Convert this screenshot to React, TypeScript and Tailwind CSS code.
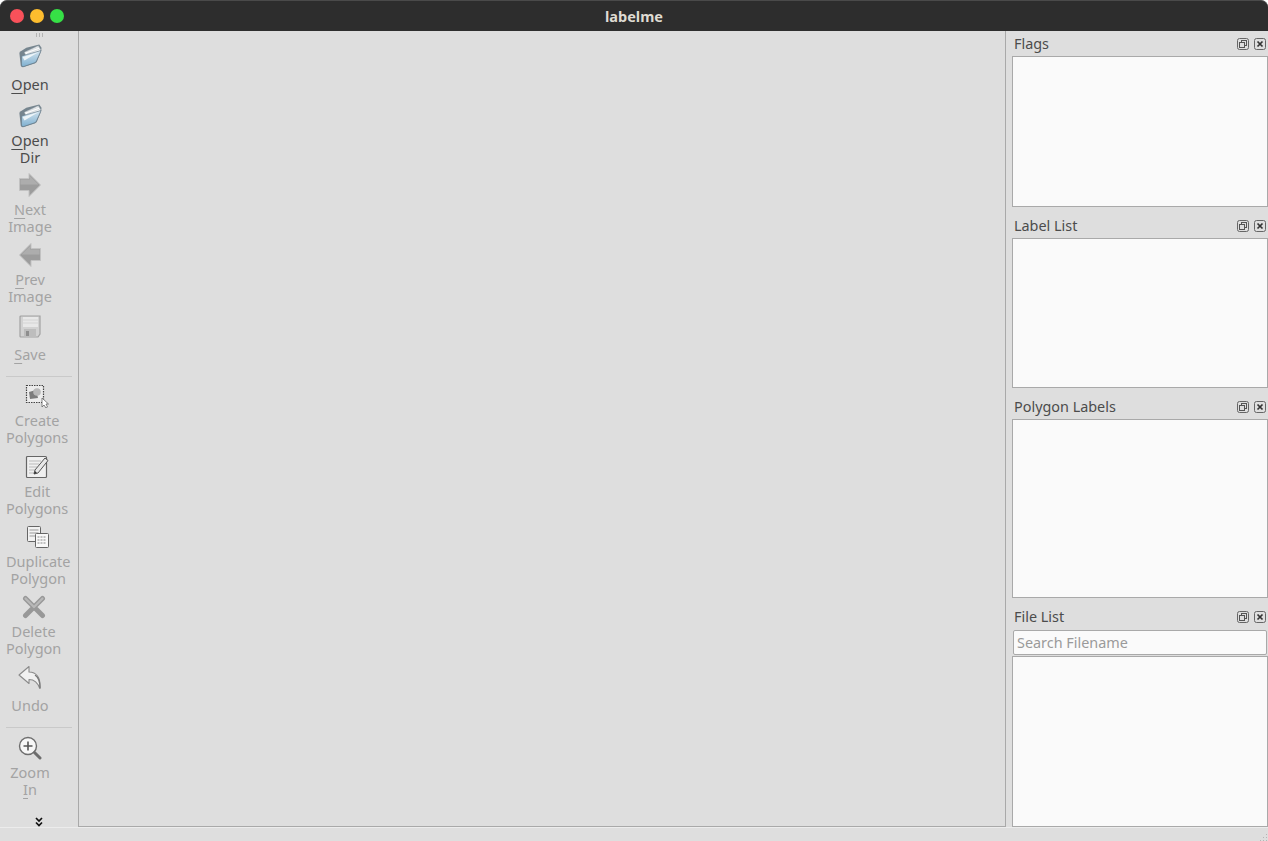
import { FunctionComponent, ReactNode } from 'react';

const FolderIcon = ({ id }: { id: string }) => (
  <svg width="26" height="26" viewBox="0 0 26 26">
    <defs>
      <linearGradient id={id} x1="0" y1="0" x2="0" y2="1">
        <stop offset="0" stopColor="#d4e4ef" />
        <stop offset="1" stopColor="#7fb0d0" />
      </linearGradient>
    </defs>
    <path d="M1.5 10 Q1.5 8 3.5 7.5 L9 4 L23 0.5 L25.5 4 L25 8 L20.5 19 Q20 20.5 18 21 L6 25 Q3.5 25.5 3 23.5Z" fill="#76858f" />
    <path d="M7 9 L22 2 L25 7 L9 14Z" fill="#fbfbfb" stroke="#a3adb4" strokeWidth="0.6" />
    <path d="M9 8.5 L22.5 3.5 M10 10.5 L23.5 5.5" stroke="#c6ced4" strokeWidth="0.7" />
    <path d="M4 13 L25 7 L20 18.5 Q19.5 20 17.5 20.5 L6 24.5 Q4 24.5 3.8 23Z" fill={`url(#${id})`} stroke="#647987" strokeWidth="0.7" />
    <path d="M5 14 L22 9 L7 18Z" fill="#f4f8fb" opacity="0.9" />
  </svg>
);

const ArrowIcon = ({ left }: { left?: boolean }) => (
  <svg width="24" height="24" viewBox="0 0 24 24" className={left ? '-scale-x-100' : ''}>
    <path d="M1.5 5.5 H11 V0.5 L22.5 12 L11 23.5 V17.5 H1.5Z" fill="#9c9c9c" stroke="#c2c2c2" strokeWidth="1" />
    <path d="M2.5 6.5 H12 V3 L20.5 11.5 H2.5Z" fill="#adadad" />
  </svg>
);

const SaveIcon = () => (
  <svg width="24" height="24" viewBox="0 0 24 24">
    <path d="M2 3 Q2 2 3 2 H22 V20 L20 23 H3 Q2 23 2 22Z" fill="#d2d2d2" stroke="#a2a2a2" strokeWidth="1.2" />
    <rect x="5" y="3" width="15" height="10" fill="#e8e8e8" />
    <path d="M5 6 H20 M5 9 H20" stroke="#d4d4d4" />
    <rect x="6" y="15" width="12" height="8" fill="#bdbdbd" />
    <rect x="8" y="17" width="3" height="5" fill="#8e8e8e" />
  </svg>
);

const CreateIcon = () => (
  <svg width="24" height="24" viewBox="0 0 24 24">
    <rect x="1.5" y="1.5" width="17" height="17" fill="#ececec" stroke="#444" strokeWidth="1.2" strokeDasharray="1.5 1" />
    <path d="M4 8 L11 6 L13 14 L5 15Z" fill="#7c7c7c" />
    <circle cx="12" cy="8" r="3.8" fill="#b8b8b8" />
    <path d="M17 14 V23 L19 21 L21 24 L22.5 23 L21 20 H23.5Z" fill="#fff" stroke="#666" strokeWidth="0.8" />
  </svg>
);

const EditIcon = () => (
  <svg width="24" height="24" viewBox="0 0 24 24">
    <rect x="1.5" y="1.5" width="20" height="21" rx="1" fill="#f0f0f0" stroke="#666" strokeWidth="1.2" />
    <path d="M4 6 H16 M4 9 H14 M4 12 H12 M4 15 H10 M4 18 H10" stroke="#bbb" />
    <path d="M9 19 L10 15 L20 3 L23 5.5 L13 18Z" fill="#e8e8e8" stroke="#555" />
    <path d="M9 19 L10 16 L12 18Z" fill="#333" />
  </svg>
);

const DuplicateIcon = () => (
  <svg width="24" height="24" viewBox="0 0 24 24">
    <rect x="1.5" y="1.5" width="13" height="15" rx="1" fill="#f2f2f2" stroke="#666" />
    <path d="M3.5 5 H12.5 M3.5 8 H12.5 M3.5 11 H12.5" stroke="#999" />
    <rect x="9.5" y="8.5" width="13" height="14" rx="1" fill="#f8f8f8" stroke="#666" />
    <path d="M11.5 12 H20.5 M11.5 15 H20.5 M11.5 18 H20.5" stroke="#888" strokeDasharray="2 1" />
  </svg>
);

const DeleteIcon = () => (
  <svg width="24" height="24" viewBox="0 0 24 24">
    <path d="M3.5 3.5 L20.5 20.5 M20.5 3.5 L3.5 20.5" stroke="#989898" strokeWidth="5" strokeLinecap="round" />
    <path d="M3.5 3.5 L12 12 M20.5 3.5 L12 12" stroke="#b8b8b8" strokeWidth="2.2" strokeLinecap="round" />
  </svg>
);

const UndoIcon = () => (
  <svg width="24" height="24" viewBox="0 0 24 24">
    <path d="M1 10 L11 1.5 V7 C18 7 23 12 22 24 C20 18 17 14.5 11 14.5 V18.5Z" fill="#f1f1f1" stroke="#8a8a8a" strokeWidth="1.1" strokeLinejoin="round" />
    <path d="M17 10 C20 12 22 17 22 23" stroke="#777" strokeWidth="1.2" fill="none" />
  </svg>
);

const ZoomIcon = () => (
  <svg width="24" height="24" viewBox="0 0 24 24">
    <circle cx="10" cy="10" r="8.5" fill="#f7f7f7" stroke="#6e6e6e" strokeWidth="1.4" />
    <path d="M10 5.5 V14.5 M5.5 10 H14.5" stroke="#555" strokeWidth="1.6" />
    <path d="M16.5 16.5 L22 22" stroke="#6e6e6e" strokeWidth="3" strokeLinecap="round" />
  </svg>
);

interface ToolItemProps {
  icon: ReactNode;
  label: ReactNode;
  className: string;
  labelClass: string;
  enabled?: boolean;
}

const ToolItem: FunctionComponent<ToolItemProps> = ({ icon, label, className, labelClass, enabled }) => (
  <div className={`ml-[6px] min-w-[48px] self-start flex flex-col items-center pt-[6px] ${className}`}>
    <div className="h-[24px] w-[24px] flex items-center justify-center">{icon}</div>
    <div className={`text-center text-[14.5px] leading-[17px] whitespace-nowrap ${labelClass} ${enabled ? 'text-[#4c4c4c]' : 'text-[#a3a3a3]'}`}>
      {label}
    </div>
  </div>
);

const Mn = ({ children, enabled }: { children: string; enabled?: boolean }) => (
  <span className={`underline underline-offset-[3px] decoration-1 ${enabled ? 'decoration-[#4c4c4c]' : 'decoration-[#a3a3a3]'}`}>{children}</span>
);

const Separator = ({ className }: { className: string }) => (
  <div className={`ml-[6px] w-[66px] h-px bg-[#c9c9c9] shrink-0 ${className}`} />
);

const Toolbar = () => (
  <div className="w-[78px] shrink-0 flex flex-col">
    <div className="h-[7px] flex justify-center gap-[2px] pt-[2px] pl-[1px]">
      <div className="w-px h-[4px] bg-[#b4b4b4]" />
      <div className="w-px h-[4px] bg-[#b4b4b4]" />
      <div className="w-px h-[4px] bg-[#b4b4b4]" />
    </div>
    <ToolItem className="h-[60px]" labelClass="mt-[8px]" enabled icon={<FolderIcon id="f1" />} label={<><Mn enabled>O</Mn>pen</>} />
    <ToolItem className="h-[69px]" labelClass="mt-[4px]" enabled icon={<FolderIcon id="f2" />} label={<><Mn enabled>O</Mn>pen<br />Dir</>} />
    <ToolItem className="h-[70px]" labelClass="mt-[4px]" icon={<ArrowIcon />} label={<><Mn>N</Mn>ext<br />Image</>} />
    <ToolItem className="h-[71px]" labelClass="mt-[4px]" icon={<ArrowIcon left />} label={<><Mn>P</Mn>rev<br />Image</>} />
    <ToolItem className="h-[60px]" labelClass="mt-[8px]" icon={<SaveIcon />} label={<><Mn>S</Mn>ave</>} />
    <Separator className="mt-[8px] mb-[1px]" />
    <ToolItem className="h-[71px]" labelClass="mt-[4px]" icon={<CreateIcon />} label={<>Create<br />Polygons</>} />
    <ToolItem className="h-[70px]" labelClass="mt-[4px]" icon={<EditIcon />} label={<>Edit<br />Polygons</>} />
    <ToolItem className="h-[70px]" labelClass="mt-[4px]" icon={<DuplicateIcon />} label={<>Duplicate<br />Polygon</>} />
    <ToolItem className="h-[70px]" labelClass="mt-[4px]" icon={<DeleteIcon />} label={<>Delete<br />Polygon</>} />
    <ToolItem className="h-[60px]" labelClass="mt-[8px]" icon={<UndoIcon />} label="Undo" />
    <Separator className="mt-[8px] mb-[2px]" />
    <ToolItem className="h-[70px]" labelClass="mt-[4px]" icon={<ZoomIcon />} label={<>Zoom<br /><Mn>I</Mn>n</>} />
    <div className="mt-auto ml-[35px]">
      <svg width="8" height="10" viewBox="0 0 8 10" className="block">
        <path d="M1 1 L4 4 L7 1 M1 5.5 L4 8.5 L7 5.5" stroke="#111" strokeWidth="1.7" fill="none" />
      </svg>
    </div>
  </div>
);

const DockTitle = ({ title }: { title: string }) => (
  <div className="h-[24px] shrink-0 flex items-center justify-between pl-[2px] pr-[2px] pb-[1px] text-[14.4px] text-[#4c4c4c]">
    <span>{title}</span>
    <div className="flex gap-[5px]">
      <svg width="12" height="12" viewBox="0 0 12 12">
        <rect x="0.5" y="0.5" width="11" height="11" rx="2" fill="none" stroke="#666" />
        <rect x="4.5" y="2.5" width="5" height="5" fill="none" stroke="#555" />
        <rect x="2.5" y="4.5" width="5" height="5" fill="#dedede" stroke="#555" />
      </svg>
      <svg width="12" height="12" viewBox="0 0 12 12">
        <rect x="0.5" y="0.5" width="11" height="11" rx="2" fill="none" stroke="#666" />
        <path d="M3.5 3.5 L8.5 8.5 M8.5 3.5 L3.5 8.5" stroke="#333" strokeWidth="1.7" />
      </svg>
    </div>
  </div>
);

const ListBox = ({ className }: { className: string }) => (
  <div className={`bg-[#fafafa] border border-[#a9a9a9] ${className}`} />
);

const Dock = () => (
  <div className="w-[262px] shrink-0 pt-px pl-[6px] flex flex-col">
    <DockTitle title="Flags" />
    <ListBox className="h-[151px]" />
    <div className="mt-[7px]"><DockTitle title="Label List" /></div>
    <ListBox className="h-[150px]" />
    <div className="mt-[7px]"><DockTitle title="Polygon Labels" /></div>
    <ListBox className="h-[179px]" />
    <div className="mt-[7px]"><DockTitle title="File List" /></div>
    <input
      readOnly
      placeholder="Search Filename"
      className="mt-[1px] h-[25px] w-[254px] ml-px shrink-0 rounded-[2px] bg-[#fafafa] border border-[#a9a9a9] px-[3px] text-[14.4px] outline-none placeholder:text-[#9a9a9a]"
    />
    <ListBox className="mt-px flex-1" />
  </div>
);

export default function App() {
  return (
    <div className="w-[1268px] h-[841px] flex flex-col overflow-hidden bg-white font-['Noto_Sans','Open_Sans',sans-serif]">
      <div className="h-[31px] shrink-0 relative flex items-center rounded-t-[7px] bg-[#2d2d2d] border-t border-[#4a4a4a] pl-[10px] gap-[6px]">
        <div className="w-[14px] h-[14px] rounded-full bg-[#f9515a]" />
        <div className="w-[14px] h-[14px] rounded-full bg-[#fdbd2e]" />
        <div className="w-[14px] h-[14px] rounded-full bg-[#36e046]" />
        <div className="absolute inset-x-0 pt-[2px] text-center text-[14.5px] font-bold text-[#dfdbd2]">labelme</div>
      </div>
      <div className="flex-1 flex min-h-0 bg-[#dedede]">
        <Toolbar />
        <div className="flex-1 border border-[#a9a9a9] border-t-0 bg-[#dedede]" />
        <Dock />
      </div>
      <div className="h-[14px] shrink-0 bg-[#dedede] border-t border-[#ececec] relative">
        <svg width="10" height="10" viewBox="0 0 10 10" className="absolute right-0 bottom-0">
          <path d="M8 3h1v1H8z M5 6h1v1H5z M8 6h1v1H8z M2 9h1v1H2z M5 9h1v1H5z M8 9h1v1H8z" fill="#b5b5b5" />
        </svg>
      </div>
    </div>
  );
}
